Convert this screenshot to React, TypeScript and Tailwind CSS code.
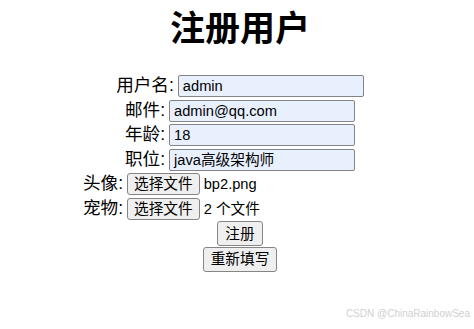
import React from 'react';

const font = { fontFamily: '"Liberation Sans", Arial, "Noto Sans CJK SC", sans-serif' };

function TextRow({ label, value }: { label: string; value: string }) {
  return (
    <div className="flex h-[24.5px] items-center justify-center gap-[4px]">
      <span className="text-[17.6px] leading-none text-black">{label}:</span>
      <div className="flex h-[22px] w-[186px] items-center rounded-[2px] border border-[#858585] bg-[#e8f0fe] px-[4px] text-[14.67px] text-black">
        {value}
      </div>
    </div>
  );
}

function FileRow({ label, value }: { label: string; value: string }) {
  return (
    <div className="flex h-[24.5px] items-center justify-center gap-[4px]">
      <span className="text-[17.6px] leading-none text-black">{label}:</span>
      <div className="flex w-[270px] items-center gap-[4px] text-[14.67px] text-black">
        <span className="flex h-[22px] items-center rounded-[3px] border border-[#858585] bg-[#efefef] px-[6px]">
          选择文件
        </span>
        <span>{value}</span>
      </div>
    </div>
  );
}

function Btn({ children }: { children: React.ReactNode }) {
  return (
    <div className="flex h-[25.5px] items-center justify-center">
      <span className="flex h-[25px] items-center rounded-[3px] border border-[#858585] bg-[#efefef] px-[7px] text-[14.67px] text-black">
        {children}
      </span>
    </div>
  );
}

export default function App() {
  return (
    <div className="relative h-[329px] w-[474px] overflow-hidden bg-white" style={font}>
      <div className="flex h-[74px] items-start justify-center pl-[6px] pt-[11px]">
        <h1 className="text-[35px] font-bold leading-[35px] text-black">注册用户</h1>
      </div>
      <div className="flex flex-col pl-[6px]">
        <TextRow label="用户名" value="admin" />
        <TextRow label="邮件" value="admin@qq.com" />
        <TextRow label="年龄" value="18" />
        <TextRow label="职位" value="java高级架构师" />
        <FileRow label="头像" value="bp2.png" />
        <FileRow label="宠物" value="2 个文件" />
        <Btn>注册</Btn>
        <Btn>重新填写</Btn>
      </div>
      <div className="absolute bottom-[8px] right-[4px] text-[10px] text-[#d0d0d0]">CSDN @ChinaRainbowSea</div>
    </div>
  );
}
